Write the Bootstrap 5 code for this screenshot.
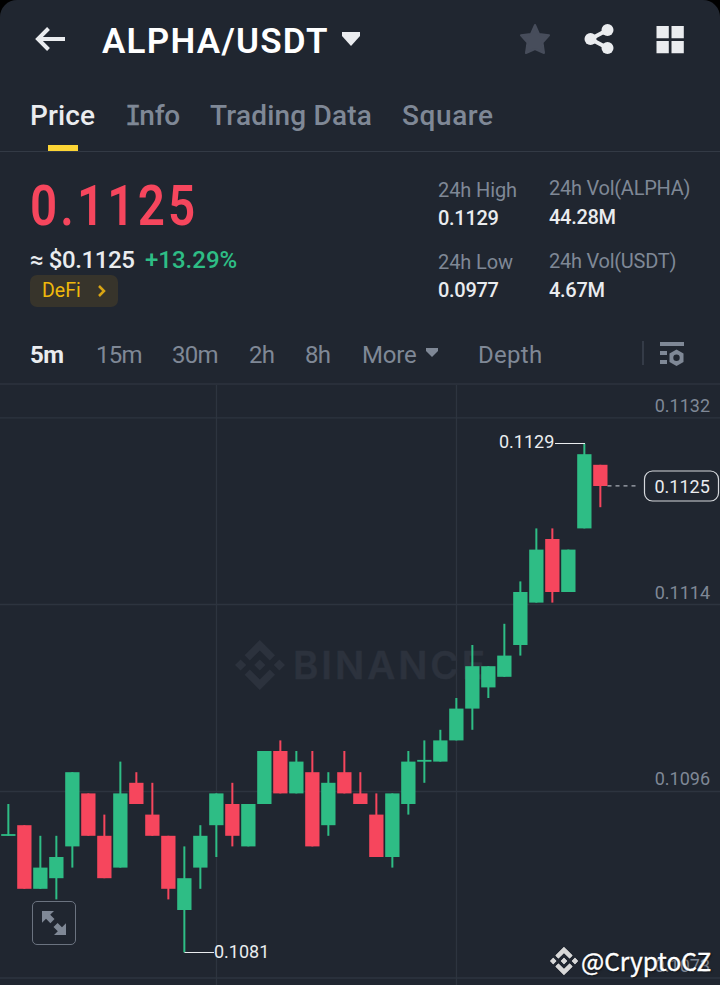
<!DOCTYPE html>
<html lang="en" data-bs-theme="dark">
<head>
<meta charset="utf-8">
<meta name="viewport" content="width=device-width, initial-scale=1">
<title>ALPHA/USDT</title>
<link href="https://cdn.jsdelivr.net/npm/bootstrap@5.3.0/dist/css/bootstrap.min.css" rel="stylesheet">
<style>
:root{--panel:#202630;--line:#2d343f;--ink:#eaecef;--dim:#7f8896;--up:#2ebd85;--down:#f6465d}
body{background:#000;font-family:Roboto,"Noto Sans",sans-serif;color:var(--ink);overflow:hidden}
.screen{width:720px;height:985px;background:var(--panel);border-radius:17px 17px 0 0;overflow:hidden}
svg{display:block;flex:none}
.topbar{height:78px;padding-left:35px;padding-right:35px}
.pair{font-size:35px;font-weight:600;color:#fff;letter-spacing:1.25px;line-height:40px;width:224px;margin:6px 0 0 35px;white-space:nowrap}
.pairdrop{margin-left:15px}
.sharing{margin-left:-15px;margin-right:41px}
.tabs{height:74px;padding:18px 0 0 30px;border-bottom:1px solid #333a45;font-size:28px;font-weight:500;line-height:40px}
.tabs a{color:var(--dim);text-decoration:none;white-space:nowrap;flex:none}
.tabs a.on{color:var(--ink);position:relative}
.tabs a.on::after{content:"";position:absolute;left:18px;bottom:0;width:30px;height:6px;background:#fcd535}
.t1{width:96px;letter-spacing:.1px}.t2{width:84px;letter-spacing:-.2px}.t3{width:192px;letter-spacing:.2px}.t4{letter-spacing:.6px}
.slab{font-family:"DejaVu Sans Mono",monospace;font-size:27px;font-weight:400;letter-spacing:-2px;margin-left:-1px;-webkit-text-stroke:.5px currentColor}
.summary{height:176px;padding:19px 0 0 30px}
.lastprice{width:408px}
.big{font-size:56px;font-weight:600;line-height:70px;color:var(--down);letter-spacing:3.7px;transform:scaleX(.85);transform-origin:0 50%}
.approx{font-size:24px;font-weight:500;line-height:30px;height:34px;padding-top:4px}
.approx .usd{width:115px;white-space:nowrap;letter-spacing:-.4px}
.pct{color:var(--up)}
.tagpill{width:88px;height:32px;background:#37342b;border-radius:7px;color:#f0b90b;font-size:19.5px;padding:0 11px 0 12px}
.stats{font-size:20px;line-height:24px;white-space:nowrap}
.stats dt{font-weight:400;color:var(--dim);height:28px;letter-spacing:-.1px}
.stats dd{font-weight:500;margin:0;height:44px;letter-spacing:-.3px}
.colA{width:111px;padding-top:7px}
.colB{padding-top:5px}
.colB dt{letter-spacing:-.25px;height:29px}
.ranges{height:57px;padding:9px 0 0 30px;font-size:24px;line-height:36px;color:var(--dim);border-bottom:2px solid #292f3a}
.ranges span{flex:none;white-space:nowrap;letter-spacing:-.7px}
.ranges .on{color:var(--ink);font-weight:700;width:66px;letter-spacing:-.4px}
.r15{width:76px}.r30{width:77px}.r2{width:56px}.r8{width:57px}.rmore{width:63px}
.ranges .rmore{letter-spacing:-.2px}
.ranges .rdepth{margin-left:39px;letter-spacing:.3px;width:164px}
.moredrop{margin-top:10px}
.tune{margin:5px 0 0 16px}
.vr1{width:2px;height:24px;background:#343b47;margin-top:4px}
.chart{height:600px}
.axis{font-size:18px;fill:var(--dim)}
.expand{left:32px;top:516px;width:44px;height:44px;border:1px solid #6b7380;border-radius:5px;background:transparent}
.credit{left:550px;top:559px;font-family:"Noto Sans CJK SC",sans-serif;font-size:24.5px;line-height:34px;color:#fff;text-shadow:1px 1px 2px rgba(0,0,0,.65);-webkit-text-stroke:.35px #fff}
.credit svg{margin-right:3px}
</style>
<script src="https://cdn.jsdelivr.net/npm/bootstrap@5.3.0/dist/js/bootstrap.bundle.min.js"></script>
</head>
<body>
<main class="screen d-flex flex-column">
  <header class="topbar d-flex align-items-center flex-shrink-0">
    <svg width="32" height="26" viewBox="0 0 32 26"><path d="M30 13H3.500M13.500 2.500L3 13L13.500 23.500" fill="none" stroke="#eaecef" stroke-width="4"/></svg>
    <h1 class="pair mb-0">ALPHA/USDT</h1>
    <svg class="pairdrop" width="20" height="16" viewBox="0 0 20 16"><path d="M1 1H19V5L10 15L1 5Z" fill="#eaecef"/></svg>
    <div class="d-flex align-items-center ms-auto">
      <svg width="32" height="32" viewBox="0 0 32 32" class="me-5"><path d="M16 2L20 11L30 12.300L23.500 19.500L25 30L16 26L7 30L8.500 19.500L2 12.300L12 11Z" fill="#474d5b" stroke="#474d5b" stroke-width="2" stroke-linejoin="round"/></svg>
      <svg class="sharing" width="31" height="32" viewBox="0 0 31 32"><path d="M23.500 7L6.500 16L23.500 25" fill="none" stroke="#eaecef" stroke-width="4"/><circle cx="23.500" cy="7" r="6" fill="#eaecef"/><circle cx="6.500" cy="16" r="6" fill="#eaecef"/><circle cx="23.500" cy="25" r="6" fill="#eaecef"/></svg>
      <svg width="29" height="29" viewBox="0 0 29 29"><path d="M.5 1h12.300v12.300H.5zM15.500 1h12.300v12.300H15.500zM.5 16h12.300v12.300H.5zM15.500 16h12.300v12.300H15.500z" fill="#eaecef"/></svg>
    </div>
  </header>
  <nav class="tabs d-flex flex-shrink-0">
    <a class="t1 on" href="#">Price</a><a class="t2" href="#"><span class="slab">I</span>nfo</a><a class="t3" href="#">Trading Data</a><a class="t4" href="#">Square</a>
  </nav>
  <section class="summary d-flex flex-shrink-0">
    <div class="lastprice flex-shrink-0">
      <div class="big">0.1125</div>
      <div class="approx d-flex"><span class="usd">≈ $0.1125</span><span class="pct">+13.29%</span></div>
      <div class="tagpill d-flex align-items-center justify-content-between"><span>DeFi</span><svg width="10" height="14" viewBox="0 0 10 14"><path d="M2 2L7 7L2 12" fill="none" stroke="#d9a514" stroke-width="2.500"/></svg></div>
    </div>
    <dl class="stats colA mb-0 flex-shrink-0"><dt>24h High</dt><dd>0.1129</dd><dt>24h Low</dt><dd>0.0977</dd></dl>
    <dl class="stats colB mb-0 flex-shrink-0"><dt>24h Vol(ALPHA)</dt><dd>44.28M</dd><dt>24h Vol(USDT)</dt><dd>4.67M</dd></dl>
  </section>
  <div class="ranges d-flex flex-shrink-0">
    <span class="on">5m</span><span class="r15">15m</span><span class="r30">30m</span><span class="r2">2h</span><span class="r8">8h</span><span class="rmore">More</span>
    <svg class="moredrop" width="14" height="11" viewBox="0 0 14 11"><path d="M1 1H13V4L7 10L1 4Z" fill="#7f8896"/></svg>
    <span class="rdepth">Depth</span>
    <div class="vr1"></div>
    <svg class="tune" width="26" height="26" viewBox="0 0 26 26"><path d="M0 0H24V4H0ZM0 9H7V13H0ZM0 18H7V22H0Z" fill="#7f8896"/><path fill-rule="evenodd" d="M16.500 7.500L23.500 11.500V20L16.500 24L9.500 20V11.500ZM16.500 12.600A3.200 3.200 0 1 0 16.500 19A3.200 3.200 0 1 0 16.500 12.600Z" fill="#7f8896"/></svg>
  </div>
  <section class="chart position-relative flex-shrink-0">
    <svg id="plot" width="720" height="600" viewBox="0 385 720 600">
      <g stroke="#2d343f" stroke-width="1.300"><path d="M0 417.800H720M0 604.500H720M0 791.500H720M0 978H720M216.500 384V985M456.500 384V985"/></g>
      <g fill="#2c323d">
        <text x="293" y="679" font-family="Inter, sans-serif" font-size="38.500" font-weight="600" stroke="#2c323d" stroke-width=".5" textLength="192" lengthAdjust="spacing">BINANCE</text>
        <path id="mark1" d="M259.800 640L275 655.200L269.800 660.400L259.800 650.600L249.800 660.400L244.600 655.200ZM259.800 690L275 674.800L269.800 669.600L259.800 679.400L249.800 669.600L244.600 674.800ZM259.800 659.400L265.400 665L259.800 670.600L254.200 665ZM240.600 659.400L246.200 665L240.600 670.600L235 665ZM279.400 659.400L285 665L279.400 670.600L273.800 665Z"/>
      </g>
      <g id="candles"></g>
      <path d="M555 443.500H585M184.500 952.500H214" stroke="#eaecef" stroke-width="1.200"/>
      <path d="M607.500 485.800H636" stroke="#a8adb5" stroke-width="1.200" stroke-dasharray="4 4"/>
      <g class="axis" text-anchor="end">
        <text x="710" y="412">0.1132</text><text x="710" y="599">0.1114</text><text x="710" y="785">0.1096</text><text x="710" y="972">0.1073</text>
      </g>
      <rect x="644.500" y="471" width="74" height="30" rx="8" fill="#202630" stroke="#d5d8dc" stroke-width="1.200"/>
      <g font-size="18" fill="#eaecef"><text x="654.500" y="493">0.1125</text><text x="499" y="448">0.1129</text><text x="214" y="958">0.1081</text></g>
    </svg>
    <button class="expand position-absolute p-0" aria-label="Expand"><svg width="42" height="42" viewBox="0 0 42 42"><path d="M9 9H21L17.200 12.800L21.500 17.100L17.400 21.200L13 16.800L9 20.800ZM33 33H21L24.800 29.200L20.500 25L24.600 20.900L29 25.200L33 21.200Z" fill="#7f8896"/><path d="M17 25L25 17" stroke="#202630" stroke-width="2.200"/></svg></button>
    <div class="credit position-absolute d-flex align-items-center">
      <svg width="28" height="28" viewBox="234.800 640 50 50"><use href="#mark1" fill="#d8d8d8"/><path fill="#d8d8d8" d="M259.800 640L275 655.200L269.800 660.400L259.800 650.600L249.800 660.400L244.600 655.200ZM259.800 690L275 674.800L269.800 669.600L259.800 679.400L249.800 669.600L244.600 674.800ZM259.800 659.400L265.400 665L259.800 670.600L254.200 665ZM240.600 659.400L246.200 665L240.600 670.600L235 665ZM279.400 659.400L285 665L279.400 670.600L273.800 665Z"/></svg><span>@CryptoCZ</span>
    </div>
  </section>
</main>
<script>
// direction, high, body top, body bottom, low: ticks of 0.0001 below 0.1129
const rows = [
 [1,34,37,37,37],[0,36,36,42,42],[1,37,40,42,42],[1,37,39,41,43],[1,31,31,38,40],[0,33,33,37,37],
 [0,35,37,41,41],[1,30,33,40,40],[0,31,32,34,34],[0,32,35,37,37],[0,37,37,42,43],[1,38,41,44,48],
 [1,36,37,40,42],[1,33,33,36,39],[0,32,34,37,38],[1,34,34,38,38],[1,29,29,34,34],[0,28,29,33,33],
 [1,29,30,33,33],[0,29,31,38,38],[1,31,32,36,37],[0,29,31,33,33],[0,31,33,34,34],[0,33,35,39,39],
 [1,33,33,39,40],[1,29,30,34,35],[1,28,30,30,32],[1,27,28,30,30],[1,24,25,28,28],[1,19,21,25,27],
 [1,21,21,23,24],[1,17,20,22,22],[1,13,14,19,20],[1,8,10,15,15],[0,8,9,14,15],[1,10,10,14,14],
 [1,0,1,8,8],[0,2,2,4,6]];
const y = k => 443.6 + k * 10.6;
document.getElementById('candles').innerHTML = rows.map(([up, h, t, b, l], i) => {
  const c = up ? '#2ebd85' : '#f6465d', x = 8.35 + i * 16;
  const top = t === b ? y(t) - 1.7 : y(t), hgt = t === b ? 1.8 : y(b) - y(t);
  return `<g fill="${c}"><rect x="${x - 1}" y="${y(h)}" width="2" height="${y(l) - y(h)}"/><rect x="${x - 7.15}" y="${top}" width="14.3" height="${hgt}"/></g>`;
}).join('');
</script>
</body>
</html>
